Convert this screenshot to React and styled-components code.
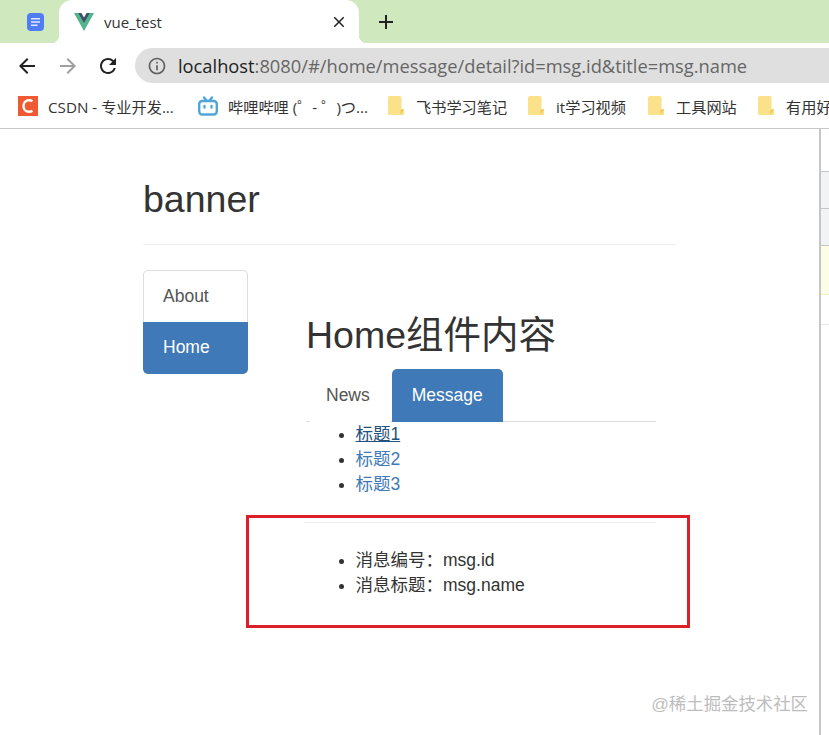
import React from 'react';
import styled, { createGlobalStyle } from 'styled-components';

const SANS = `"Liberation Sans", "Noto Sans CJK SC", sans-serif`;
const UI = `"Open Sans", "Noto Sans CJK SC", sans-serif`;

const GlobalStyle = createGlobalStyle`
  html, body { margin: 0; padding: 0; background: #fff; }
  * { box-sizing: border-box; }
`;

const Icon = ({ d, size = 24, color = '#222' }) => (
  <svg width={size} height={size} viewBox="0 0 24 24" fill={color}>
    <path d={d} />
  </svg>
);

const DocIcon = () => (
  <svg width="17" height="18" viewBox="0 0 17 18">
    <rect width="17" height="18" rx="4" fill="#4f7df3" />
    <path d="M4 5h9v1.600H4zM4 8.200h9v1.600H4zM4 11.400h6.500V13H4z" fill="#dfe8ff" />
  </svg>
);

const VueLogo = () => (
  <svg width="20" height="18" viewBox="0 0 20 18">
    <path d="M0 0h4l6 10.400L16 0h4L10 18z" fill="#4fb58a" />
    <path d="M4 0h3.400L10 4.600 12.600 0H16l-6 10.400z" fill="#3b5368" />
  </svg>
);

const CsdnIcon = () => (
  <svg width="20" height="20" viewBox="0 0 20 20">
    <rect width="20" height="20" fill="#ef5a33" />
    <path d="M14.500 5.200C13.500 4.500 12.400 4.200 11 4.200 7.800 4.200 5.500 6.500 5.500 10s2.300 5.800 5.500 5.800c1.400 0 2.500-.3 3.500-1" fill="none" stroke="#fff" strokeWidth="2.400" />
  </svg>
);

const BiliIcon = () => (
  <svg width="20" height="20" viewBox="0 0 20 20" fill="none" stroke="#4ea6d8" strokeWidth="2.400" strokeLinecap="round">
    <rect x="1.200" y="5" width="17.600" height="13.500" rx="3" />
    <path d="M6 1.500l2.500 3M14 1.500l-2.500 3M6.500 10v1.500M13.500 10v1.500" />
  </svg>
);

const FolderIcon = () => (
  <svg width="16" height="19" viewBox="0 0 16 19">
    <path d="M0 1.500Q0 0 1.500 0H12q1.500 0 1.500 1.500V13H16v6H1.500Q0 19 0 17.500z" fill="#fbe28a" />
    <path d="M12.500 19v-5.500H16z" fill="#f0c95a" />
  </svg>
);

const Screen = styled.div`
  position: relative;
  width: 829px;
  height: 735px;
  overflow: hidden;
  background: #fff;
  font-family: ${SANS};
`;

const TabStrip = styled.div`
  display: flex;
  align-items: center;
  height: 43px;
  background: #cfe8bd;
`;

const PinnedTab = styled.div`
  display: flex;
  width: 59px;
  padding-left: 27px;
`;

const ActiveTab = styled.div`
  position: relative;
  display: flex;
  align-items: center;
  width: 300px;
  height: 43px;
  padding: 0 11px 0 15px;
  background: #fff;
  border-radius: 13px 13px 0 0;
  font-family: ${UI};
  font-size: 15px;
  color: #333;

  &::before,
  &::after {
    content: '';
    position: absolute;
    bottom: 0;
    width: 8px;
    height: 8px;
  }
  &::before {
    left: -8px;
    background: radial-gradient(circle at 0 0, #cfe8bd 8px, #fff 8.500px);
  }
  &::after {
    right: -8px;
    background: radial-gradient(circle at 100% 0, #cfe8bd 8px, #fff 8.500px);
  }
`;

const TabTitle = styled.span`
  flex: 1;
  margin-left: 10px;
`;

const NewTab = styled.div`
  display: flex;
  margin-left: 15px;
`;

const Toolbar = styled.div`
  display: flex;
  align-items: center;
  height: 40px;
  padding: 5px 0 0 15px;
`;

const NavGroup = styled.div`
  display: flex;
  gap: 16.500px;
  width: 120px;
`;

const AddressBar = styled.div`
  display: flex;
  align-items: center;
  flex: 1;
  height: 35px;
  padding-left: 12px;
  background: #dfdfdf;
  border-radius: 18px 0 0 18px;
  font-family: ${UI};
  font-size: 18.300px;
  color: #666;
  white-space: nowrap;
`;

const Host = styled.span`
  margin-left: 11px;
  color: #222;
`;

const Bookmarks = styled.div`
  display: flex;
  align-items: center;
  height: 46px;
  padding-left: 18px;
  border-bottom: 1px solid #c8c8c8;
  white-space: nowrap;
  overflow: hidden;
`;

const Bookmark = styled.div`
  display: flex;
  align-items: center;
  flex-shrink: 0;
  gap: ${p => p.$gap}px;
  width: ${p => p.$width}px;
  font-family: ${UI};
  font-size: 15.200px;
  color: #333;
`;

const Page = styled.div`
  display: flex;
  height: 606px;
`;

const Main = styled.main`
  width: 819px;
  padding-left: 143px;
`;

const PageHeader = styled.div`
  width: 533px;
  height: 116px;
  padding-top: 50px;
  border-bottom: 1px solid #eee;
`;

const Banner = styled.h2`
  margin: 0;
  font-size: 37.500px;
  font-weight: 400;
  line-height: 41px;
  color: #333;
`;

const Row = styled.div`
  display: flex;
  align-items: flex-start;
  margin-top: 25px;
`;

const SideNav = styled.div`
  flex-shrink: 0;
  width: 105px;
`;

const SideLink = styled.a`
  display: block;
  height: 52px;
  padding-left: ${p => (p.$active ? 20 : 19)}px;
  background: ${p => (p.$active ? '#3f79b7' : '#fff')};
  border: ${p => (p.$active ? '0' : '1px solid #ddd')};
  border-bottom: 0;
  border-radius: ${p => (p.$active ? '0 0 5px 5px' : '5px 5px 0 0')};
  color: ${p => (p.$active ? '#fff' : '#555')};
  font-size: 17.500px;
  line-height: 50px;
`;

const Content = styled.div`
  width: 350px;
  margin-left: 58px;
  color: #333;
`;

const HomeTitle = styled.h2`
  margin: 40px 0 9px;
  font-size: 37.500px;
  font-weight: 400;
  line-height: 50px;
  color: #333;
`;

const Tabs = styled.div`
  display: flex;
  height: 53px;
  border-bottom: 1px solid #ddd;
`;

const TabLink = styled.a`
  height: 53px;
  margin: ${p => (p.$active ? '0' : '0 2px 0 3px')};
  padding: 0 20px 0 ${p => (p.$active ? 20 : 17)}px;
  background: ${p => (p.$active ? '#3f79b7' : '#fff')};
  border-radius: 5px 5px 0 0;
  color: ${p => (p.$active ? '#fff' : '#555')};
  font-size: 17.500px;
  line-height: 52px;
`;

const List = styled.ul`
  margin: 0;
  padding-left: 49.500px;
  font-size: 17.500px;
  line-height: 25px;
`;

const TopicLink = styled.a`
  color: ${p => (p.$hover ? '#23527c' : '#3f79b7')};
  text-decoration: ${p => (p.$hover ? 'underline' : 'none')};
`;

const Rule = styled.hr`
  height: 1px;
  margin: 25px 0 25px -2px;
  border: 0;
  background: #eee;
`;

const RedFrame = styled.div`
  position: absolute;
  left: 246px;
  top: 515px;
  width: 444px;
  height: 113px;
  border: 3px solid #dc2029;
`;

const Watermark = styled.div`
  position: absolute;
  right: 21px;
  top: 692px;
  font-size: 17.400px;
  line-height: 24px;
  color: #bdbdbd;
  white-space: nowrap;
`;

const SidePanel = styled.aside`
  flex: 1;
  border-left: 2px solid #c6c6c6;
`;

const PanelRow = styled.div`
  height: ${p => p.$height}px;
  background: ${p => p.$bg};
  border-bottom: 1px solid ${p => p.$line};
`;

const bookmarks = [
  { icon: <CsdnIcon />, label: 'CSDN - 专业开发...', width: 180, gap: 10 },
  { icon: <BiliIcon />, label: '哔哩哔哩 (゜- ゜)つ...', width: 190, gap: 10 },
  { icon: <FolderIcon />, label: '飞书学习笔记', width: 140, gap: 12 },
  { icon: <FolderIcon />, label: 'it学习视频', width: 120, gap: 12 },
  { icon: <FolderIcon />, label: '工具网站', width: 110, gap: 12 },
  { icon: <FolderIcon />, label: '有用好物', width: 90, gap: 12 },
];

const panelRows = [
  { height: 43, bg: '#fff', line: '#c6c6c6' },
  { height: 37, bg: '#f1f3f4', line: '#c6c6c6' },
  { height: 37, bg: '#f1f3f4', line: '#c6c6c6' },
  { height: 49, bg: '#fdfde6', line: '#f3f0c4' },
  { height: 30, bg: '#fff', line: '#e8e8e8' },
];

const App = () => (
  <Screen>
    <GlobalStyle />
    <TabStrip>
      <PinnedTab>
        <DocIcon />
      </PinnedTab>
      <ActiveTab>
        <VueLogo />
        <TabTitle>vue_test</TabTitle>
        <Icon size={18} color="#222" d="M19 6.410 17.590 5 12 10.590 6.410 5 5 6.410 10.590 12 5 17.590 6.410 19 12 13.410 17.590 19 19 17.590 13.410 12z" />
      </ActiveTab>
      <NewTab>
        <Icon size={24} color="#222" d="M19 13h-6v6h-2v-6H5v-2h6V5h2v6h6v2z" />
      </NewTab>
    </TabStrip>
    <Toolbar>
      <NavGroup>
        <Icon color="#222" d="M20 11H7.830l5.590-5.590L12 4l-8 8 8 8 1.410-1.410L7.830 13H20v-2z" />
        <Icon color="#a0a0a0" d="M4 11h12.170l-5.590-5.590L12 4l8 8-8 8-1.410-1.410L16.170 13H4v-2z" />
        <Icon color="#222" d="M17.650 6.350A7.958 7.958 0 0 0 12 4c-4.420 0-7.990 3.580-7.990 8s3.570 8 7.990 8c3.730 0 6.840-2.550 7.730-6h-2.080A5.990 5.990 0 0 1 12 18c-3.310 0-6-2.690-6-6s2.690-6 6-6c1.660 0 3.140.690 4.220 1.780L13 11h7V4l-2.350 2.350z" />
      </NavGroup>
      <AddressBar>
        <Icon size={20} color="#5f5f5f" d="M11 7h2v2h-2zm0 4h2v6h-2zm1-9C6.480 2 2 6.480 2 12s4.480 10 10 10 10-4.480 10-10S17.520 2 12 2zm0 18c-4.410 0-8-3.590-8-8s3.590-8 8-8 8 3.590 8 8-3.590 8-8 8z" />
        <Host>localhost</Host>:8080/#/home/message/detail?id=msg.id&amp;title=msg.name
      </AddressBar>
    </Toolbar>
    <Bookmarks>
      {bookmarks.map(b => (
        <Bookmark key={b.label} $width={b.width} $gap={b.gap}>
          {b.icon}
          {b.label}
        </Bookmark>
      ))}
    </Bookmarks>
    <Page>
      <Main>
        <PageHeader>
          <Banner>banner</Banner>
        </PageHeader>
        <Row>
          <SideNav>
            <SideLink>About</SideLink>
            <SideLink $active>Home</SideLink>
          </SideNav>
          <Content>
            <HomeTitle>Home组件内容</HomeTitle>
            <Tabs>
              <TabLink>News</TabLink>
              <TabLink $active>Message</TabLink>
            </Tabs>
            <List>
              <li><TopicLink $hover>标题1</TopicLink></li>
              <li><TopicLink>标题2</TopicLink></li>
              <li><TopicLink>标题3</TopicLink></li>
            </List>
            <Rule />
            <List>
              <li>消息编号：msg.id</li>
              <li>消息标题：msg.name</li>
            </List>
          </Content>
        </Row>
      </Main>
      <SidePanel>
        {panelRows.map((r, i) => (
          <PanelRow key={i} $height={r.height} $bg={r.bg} $line={r.line} />
        ))}
      </SidePanel>
    </Page>
    <RedFrame />
    <Watermark>@稀土掘金技术社区</Watermark>
  </Screen>
);

export default App;
